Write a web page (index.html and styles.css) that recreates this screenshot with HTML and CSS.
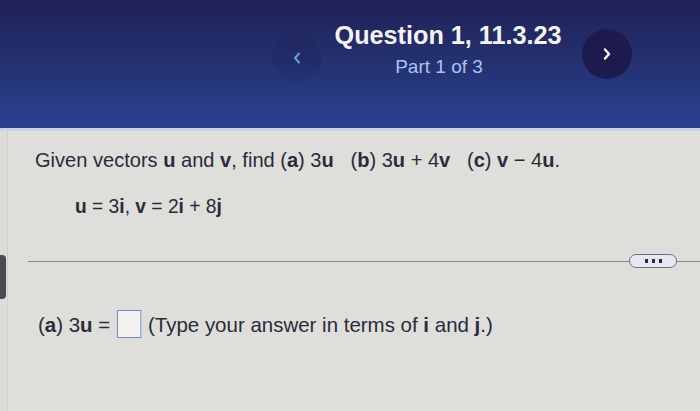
FILE: index.html
```html
<!DOCTYPE html>
<html>
<head>
<meta charset="utf-8">
<link rel="stylesheet" href="styles.css">
</head>
<body>
<div class="page">
  <header class="head">
    <div class="nav">
      <div class="prev"><svg width="10" height="14" viewBox="0 0 10 14"><path d="M7 2.5 L3 7 L7 11.5" fill="none" stroke="#6f9ad8" stroke-width="2" stroke-linecap="round" stroke-linejoin="round"/></svg></div>
      <div class="titles">
        <div class="title">Question 1, 11.3.23</div>
        <div class="part">Part 1 of 3</div>
      </div>
      <div class="next"><svg width="10" height="14" viewBox="0 0 10 14"><path d="M3 2.5 L7 7 L3 11.5" fill="none" stroke="#ffffff" stroke-width="2.4" stroke-linecap="round" stroke-linejoin="round"/></svg></div>
    </div>
  </header>
  <div class="strip"></div>
  <main class="body">
    <div class="tab"></div>
    <p class="q">Given vectors <b>u</b> and <b>v</b>, find (<b>a</b>) 3<b>u</b>&nbsp;&nbsp;&nbsp;(<b>b</b>) 3<b>u</b> + 4<b>v</b>&nbsp;&nbsp;&nbsp;(<b>c</b>) <b>v</b> &minus; 4<b>u</b>.</p>
    <p class="given"><b>u</b> = 3<b>i</b>, <b>v</b> = 2<b>i</b> + 8<b>j</b></p>
    <div class="sep">
      <div class="line"></div>
      <div class="more"><i></i><i></i><i></i></div>
      <div class="line tail"></div>
    </div>
    <p class="ans">(<b>a</b>) 3<b>u</b> = <span class="box"></span> (Type your answer in terms of <b>i</b> and <b>j</b>.)</p>
  </main>
</div>
</body>
</html>
```
FILE: styles.css
```css
html, body { margin: 0; padding: 0; }
body {
  width: 700px;
  height: 411px;
  overflow: hidden;
  font-family: "Liberation Sans", Arial, sans-serif;
  background: #dcdcd9;
}
.page { display: flex; flex-direction: column; height: 411px; }
.head {
  height: 128px;
  background: linear-gradient(180deg, #1f2157 0%, #24306f 45%, #2b4190 100%);
  display: flex;
  justify-content: flex-end;
}
.nav {
  display: flex;
  align-items: flex-start;
  margin-right: 68px;
  margin-top: 20px;
}
.prev {
  width: 50px; height: 46px;
  border-radius: 50%;
  background: rgba(20, 22, 70, 0.14);
  display: flex; align-items: center; justify-content: center;
  margin-top: 15px;
  margin-right: 16px;
}
.titles { display: flex; flex-direction: column; align-items: center; width: 236px; margin-left: -8px; }
.title { color: #f4f4f6; font-size: 26px; font-weight: bold; transform: scaleX(0.97); }
.part { color: #a9c6f0; font-size: 19px; margin-top: 5px; margin-right: 18px; }
.next {
  width: 50px; height: 50px;
  border-radius: 50%;
  background: #1d1b4d;
  display: flex; align-items: center; justify-content: center;
  margin-left: 16px;
  margin-top: 9px;
}
.strip { height: 3px; background: #c9d2e2; }
.body {
  flex: 1;
  position: relative;
  background: #dededb;
  color: #2a2b3a;
  border-left: 1px solid #cfcfcc;
  margin-left: 7px;
}
.tab {
  position: absolute; left: -8px; top: 124px;
  width: 6px; height: 44px; border-radius: 0 4px 4px 0;
  background: #4a4a55;
}
.q {
  margin: 17px 0 0 27px;
  font-size: 21px;
  transform: scaleX(0.955);
  transform-origin: left;
  white-space: nowrap;
}
.given {
  margin: 23px 0 0 67px;
  font-size: 20px;
  transform: scaleX(0.96);
  transform-origin: left;
}
.sep { display: flex; align-items: center; margin: 36px 0 0 20px; }
.line { flex: 1; height: 1px; background: #8a8a96; }
.line.tail { flex: 0 0 23px; }
.more {
  width: 46px; height: 12px;
  border: 1.5px solid #6a6f88;
  border-radius: 8px;
  background: #e6eaf0;
  display: flex; align-items: center; justify-content: center; gap: 4px;
}
.more i { width: 3px; height: 4px; background: #2a2b40; display: block; }
.ans {
  margin: 43px 0 0 30px;
  font-size: 21px;
  transform: scaleX(0.975);
  transform-origin: left;
  white-space: nowrap;
  line-height: 28px;
}
.box {
  display: inline-block;
  vertical-align: middle;
  width: 23px; height: 26px;
  border: 1.5px solid #6d86c8;
  background: #f2f2f0;
  margin: -4px 1px 0;
}
```
